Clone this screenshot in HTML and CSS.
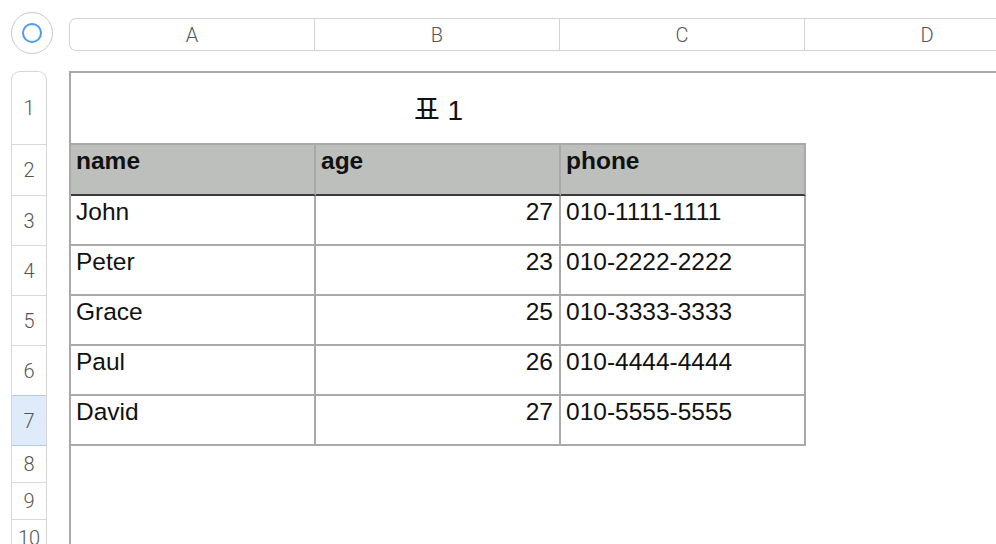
FILE: index.html
```html
<!DOCTYPE html>
<html lang="ko">
<head>
  <meta charset="UTF-8" />
  <meta name="viewport" content="width=device-width, initial-scale=1.0" />
  <title>표 1</title>
  <link rel="stylesheet" href="styles.css">
</head>
<body>
  <div class="sheet">
    <div class="corner">
      <div class="select-all"><span class="ring"></span></div>
    </div>

    <div class="col-bar">
      <div class="col-head">A</div>
      <div class="col-head">B</div>
      <div class="col-head">C</div>
      <div class="col-head">D</div>
    </div>

    <div class="row-bar">
      <div class="row-head r-title">1</div>
      <div class="row-head r-header">2</div>
      <div class="row-head">3</div>
      <div class="row-head">4</div>
      <div class="row-head">5</div>
      <div class="row-head">6</div>
      <div class="row-head sel">7</div>
      <div class="row-head r-short">8</div>
      <div class="row-head r-short">9</div>
      <div class="row-head r-short">10</div>
    </div>

    <div class="canvas">
      <div class="table-title">표 1</div>
      <div class="tbl">
        <div class="cell head">name</div>
        <div class="cell head">age</div>
        <div class="cell head">phone</div>

        <div class="cell">John</div>
        <div class="cell num">27</div>
        <div class="cell">010-1111-1111</div>

        <div class="cell">Peter</div>
        <div class="cell num">23</div>
        <div class="cell">010-2222-2222</div>

        <div class="cell">Grace</div>
        <div class="cell num">25</div>
        <div class="cell">010-3333-3333</div>

        <div class="cell">Paul</div>
        <div class="cell num">26</div>
        <div class="cell">010-4444-4444</div>

        <div class="cell">David</div>
        <div class="cell num">27</div>
        <div class="cell">010-5555-5555</div>
      </div>
    </div>
  </div>
</body>
</html>
```

FILE: styles.css
```css
* {
  box-sizing: border-box;
}
body {
  margin: 0;
  background: #fff;
  font-family: "Liberation Sans", Arial, "Noto Sans CJK KR", sans-serif;
  overflow: hidden;
}
.sheet {
  display: grid;
  grid-template-columns: 69px 1fr;
  grid-template-rows: 71px 1fr;
  height: 100vh;
  overflow: hidden;
}

/* corner button */
.corner {
  padding: 12px 0 0 11px;
}
.select-all {
  width: 42px;
  height: 42px;
  border: 1px solid #c9c9c9;
  border-radius: 50%;
  display: flex;
  justify-content: center;
  align-items: center;
}
.ring {
  width: 20px;
  height: 20px;
  border: 2px solid #4d9bf3;
  border-radius: 50%;
}

/* column letters */
.col-bar {
  margin-top: 18px;
  height: 33px;
  display: flex;
  border: 1px solid #d4d4d4;
  border-right: none;
  border-radius: 7px 0 0 7px;
  overflow: hidden;
}
.col-head {
  flex: 0 0 245px;
  border-right: 1px solid #d4d4d4;
  display: flex;
  justify-content: center;
  align-items: center;
  font-family: Roboto, "Liberation Sans", sans-serif;
  font-weight: 300;
  font-size: 20px;
  color: #555;
}

/* row numbers */
.row-bar {
  margin-left: 11px;
  width: 36px;
  border: 1px solid #d6d6d6;
  border-bottom: none;
  border-radius: 9px 9px 0 0;
}
.row-head {
  height: 50px;
  border-bottom: 1px solid #d9d9d9;
  display: flex;
  justify-content: center;
  align-items: center;
  font-family: Roboto, "Liberation Sans", sans-serif;
  font-weight: 300;
  font-size: 20px;
  color: #555;
}
.row-head.r-title {
  height: 73px;
}
.row-head.r-header {
  height: 51px;
}
.row-head.r-short {
  height: 37px;
}
.row-head.sel {
  background: #dfeafa;
  border-bottom-color: #b2c9eb;
  box-shadow: 0 -1px 0 #b2c9eb;
}

/* table canvas */
.canvas {
  border-top: 2px solid #a9a9a9;
  border-left: 2px solid #a9a9a9;
}
.table-title {
  width: 735px;
  height: 70px;
  display: flex;
  justify-content: center;
  align-items: center;
  font-size: 28px;
  color: #111;
}
.tbl {
  width: 735px;
  display: grid;
  grid-template-columns: repeat(3, 245px);
  grid-template-rows: 51px;
  grid-auto-rows: 50px;
  border-top: 2px solid #a9a9a9;
}
.cell {
  border-right: 2px solid #a9a9a9;
  border-bottom: 2px solid #a9a9a9;
  padding: 2px 6px 0 5px;
  font-size: 24.5px;
  line-height: 28px;
  color: #111;
  white-space: nowrap;
}
.cell.head {
  padding-top: 2px;
  background: #bdbfbd;
  border-bottom-color: #3b3b3b;
  font-weight: bold;
}
.cell.num {
  text-align: right;
}
```
